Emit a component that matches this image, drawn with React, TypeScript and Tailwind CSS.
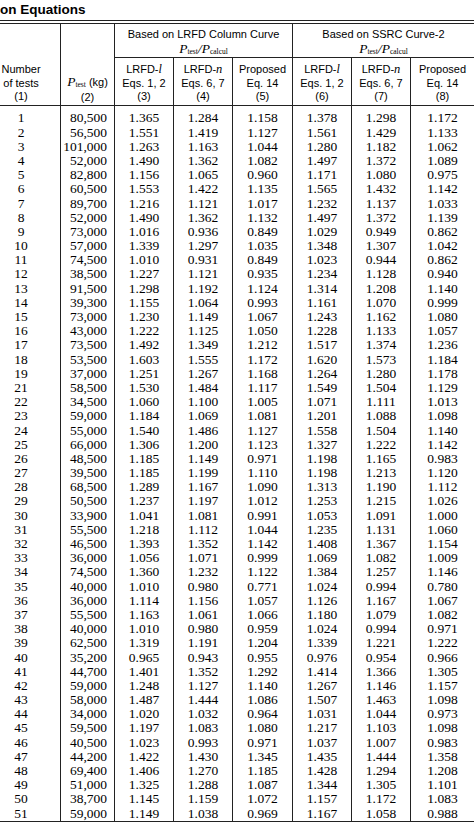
import React from "react";

const rows: string[][] = [
  ["1", "80,500", "1.365", "1.284", "1.158", "1.378", "1.298", "1.172"],
  ["2", "56,500", "1.551", "1.419", "1.127", "1.561", "1.429", "1.133"],
  ["3", "101,000", "1.263", "1.163", "1.044", "1.280", "1.182", "1.062"],
  ["4", "52,000", "1.490", "1.362", "1.082", "1.497", "1.372", "1.089"],
  ["5", "82,800", "1.156", "1.065", "0.960", "1.171", "1.080", "0.975"],
  ["6", "60,500", "1.553", "1.422", "1.135", "1.565", "1.432", "1.142"],
  ["7", "89,700", "1.216", "1.121", "1.017", "1.232", "1.137", "1.033"],
  ["8", "52,000", "1.490", "1.362", "1.132", "1.497", "1.372", "1.139"],
  ["9", "73,000", "1.016", "0.936", "0.849", "1.029", "0.949", "0.862"],
  ["10", "57,000", "1.339", "1.297", "1.035", "1.348", "1.307", "1.042"],
  ["11", "74,500", "1.010", "0.931", "0.849", "1.023", "0.944", "0.862"],
  ["12", "38,500", "1.227", "1.121", "0.935", "1.234", "1.128", "0.940"],
  ["13", "91,500", "1.298", "1.192", "1.124", "1.314", "1.208", "1.140"],
  ["14", "39,300", "1.155", "1.064", "0.993", "1.161", "1.070", "0.999"],
  ["15", "73,000", "1.230", "1.149", "1.067", "1.243", "1.162", "1.080"],
  ["16", "43,000", "1.222", "1.125", "1.050", "1.228", "1.133", "1.057"],
  ["17", "73,500", "1.492", "1.349", "1.212", "1.517", "1.374", "1.236"],
  ["18", "53,500", "1.603", "1.555", "1.172", "1.620", "1.573", "1.184"],
  ["19", "37,000", "1.251", "1.267", "1.168", "1.264", "1.280", "1.178"],
  ["21", "58,500", "1.530", "1.484", "1.117", "1.549", "1.504", "1.129"],
  ["22", "34,500", "1.060", "1.100", "1.005", "1.071", "1.111", "1.013"],
  ["23", "59,000", "1.184", "1.069", "1.081", "1.201", "1.088", "1.098"],
  ["24", "55,000", "1.540", "1.486", "1.127", "1.558", "1.504", "1.140"],
  ["25", "66,000", "1.306", "1.200", "1.123", "1.327", "1.222", "1.142"],
  ["26", "48,500", "1.185", "1.149", "0.971", "1.198", "1.165", "0.983"],
  ["27", "39,500", "1.185", "1.199", "1.110", "1.198", "1.213", "1.120"],
  ["28", "68,500", "1.289", "1.167", "1.090", "1.313", "1.190", "1.112"],
  ["29", "50,500", "1.237", "1.197", "1.012", "1.253", "1.215", "1.026"],
  ["30", "33,900", "1.041", "1.081", "0.991", "1.053", "1.091", "1.000"],
  ["31", "55,500", "1.218", "1.112", "1.044", "1.235", "1.131", "1.060"],
  ["32", "46,500", "1.393", "1.352", "1.142", "1.408", "1.367", "1.154"],
  ["33", "36,000", "1.056", "1.071", "0.999", "1.069", "1.082", "1.009"],
  ["34", "74,500", "1.360", "1.232", "1.122", "1.384", "1.257", "1.146"],
  ["35", "40,000", "1.010", "0.980", "0.771", "1.024", "0.994", "0.780"],
  ["36", "36,000", "1.114", "1.156", "1.057", "1.126", "1.167", "1.067"],
  ["37", "55,500", "1.163", "1.061", "1.066", "1.180", "1.079", "1.082"],
  ["38", "40,000", "1.010", "0.980", "0.959", "1.024", "0.994", "0.971"],
  ["39", "62,500", "1.319", "1.191", "1.204", "1.339", "1.221", "1.222"],
  ["40", "35,200", "0.965", "0.943", "0.955", "0.976", "0.954", "0.966"],
  ["41", "44,700", "1.401", "1.352", "1.292", "1.414", "1.366", "1.305"],
  ["42", "59,000", "1.248", "1.127", "1.140", "1.267", "1.146", "1.157"],
  ["43", "58,000", "1.487", "1.444", "1.086", "1.507", "1.463", "1.098"],
  ["44", "34,000", "1.020", "1.032", "0.964", "1.031", "1.044", "0.973"],
  ["45", "59,500", "1.197", "1.083", "1.080", "1.217", "1.103", "1.098"],
  ["46", "40,500", "1.023", "0.993", "0.971", "1.037", "1.007", "0.983"],
  ["47", "44,200", "1.422", "1.430", "1.345", "1.435", "1.444", "1.358"],
  ["48", "69,400", "1.406", "1.270", "1.185", "1.428", "1.294", "1.208"],
  ["49", "51,000", "1.325", "1.288", "1.087", "1.344", "1.305", "1.101"],
  ["50", "38,700", "1.145", "1.159", "1.072", "1.157", "1.172", "1.083"],
  ["51", "59,000", "1.149", "1.038", "0.969", "1.167", "1.058", "0.988"],
];

const colClasses = [
  "w-[79px] text-center",
  "w-[54px] text-right pr-[7px]",
  "w-[59px] text-center",
  "w-[59px] text-center",
  "w-[60px] text-center",
  "w-[59px] text-center",
  "w-[59px] text-center",
  "w-[63px] text-center",
];

const serif = { fontFamily: '"Liberation Serif", "Times New Roman", serif' } as const;

function PSub({ sub }: { sub: string }) {
  return (
    <span className="whitespace-nowrap">
      <span className="italic text-[13.5px]" style={serif}>P</span>
      <span className="text-[7.5px] relative top-[1px]" style={serif}>{sub}</span>
    </span>
  );
}

function SubHead({ a, b, c }: { a: React.ReactNode; b: string; c: string }) {
  return (
    <div className="flex flex-col items-center pt-[5px] leading-[13.5px]">
      <div>{a}</div>
      <div>{b}</div>
      <div>{c}</div>
    </div>
  );
}

function LrfdL() {
  return (
    <span>
      LRFD-<span className="italic text-[12px]" style={serif}>l</span>
    </span>
  );
}
function LrfdN() {
  return (
    <span>
      LRFD-<span className="italic text-[12.5px]" style={serif}>n</span>
    </span>
  );
}

export default function App() {
  return (
    <div className="w-[474px] h-[831px] overflow-hidden bg-white text-black">
      <div
        className="ml-[-18px] w-[492px]"
        style={{ fontFamily: '"Liberation Sans", Arial, sans-serif' }}
      >
        <div className="h-[20px] leading-[20px] pl-[18px] text-[13.5px] font-bold">on Equations</div>
        <div className="h-[4px] border-t-[1.5px] border-b-[1.5px] border-[#222]" />

        {/* header */}
        <div className="grid grid-cols-[79px_54px_59px_59px_60px_59px_59px_63px] grid-rows-[34px_47px] border-b-[1.5px] border-[#222] text-[11px]">
          <div className="row-span-2 border-r border-[#222] flex flex-col items-center pt-[39px] leading-[13.5px]">
            <div>Number</div>
            <div>of tests</div>
            <div>(1)</div>
          </div>
          <div className="row-span-2 border-r border-[#222] flex flex-col items-center pt-[51px] leading-[13.5px]">
            <div>
              <PSub sub="test" /> (kg)
            </div>
            <div>(2)</div>
          </div>
          <div className="col-span-3 border-r border-b border-[#222] flex flex-col items-center pt-[4px]">
            <div className="leading-[13px]">Based on LRFD Column Curve</div>
            <div className="leading-[14px] mt-[1px]">
              <PSub sub="test" />
              <span className="italic text-[13.5px]" style={serif}>/</span>
              <PSub sub="calcul" />
            </div>
          </div>
          <div className="col-span-3 border-b border-[#222] flex flex-col items-center pt-[4px]">
            <div className="leading-[13px]">Based on SSRC Curve-2</div>
            <div className="leading-[14px] mt-[1px]">
              <PSub sub="test" />
              <span className="italic text-[13.5px]" style={serif}>/</span>
              <PSub sub="calcul" />
            </div>
          </div>
          <div className="border-r border-[#222]">
            <SubHead a={<LrfdL />} b="Eqs. 1, 2" c="(3)" />
          </div>
          <div className="border-r border-[#222]">
            <SubHead a={<LrfdN />} b="Eqs. 6, 7" c="(4)" />
          </div>
          <div className="border-r border-[#222]">
            <SubHead a="Proposed" b="Eq. 14" c="(5)" />
          </div>
          <div className="border-r border-[#222]">
            <SubHead a={<LrfdL />} b="Eqs. 1, 2" c="(6)" />
          </div>
          <div className="border-r border-[#222]">
            <SubHead a={<LrfdN />} b="Eqs. 6, 7" c="(7)" />
          </div>
          <div>
            <SubHead a="Proposed" b="Eq. 14" c="(8)" />
          </div>
        </div>

        {/* body */}
        <div className="flex border-b-[1.5px] border-[#222] text-[13.5px]" style={serif}>
          {colClasses.map((cls, ci) => (
            <div
              key={ci}
              className={`${cls} ${ci < 7 ? "border-r border-[#222]" : ""} pt-[5.4px] pb-[0.6px]`}
            >
              {rows.map((r, ri) => (
                <div key={ri} className="leading-[14.2px] h-[14.2px]">
                  {r[ci]}
                </div>
              ))}
            </div>
          ))}
        </div>
      </div>
    </div>
  );
}
